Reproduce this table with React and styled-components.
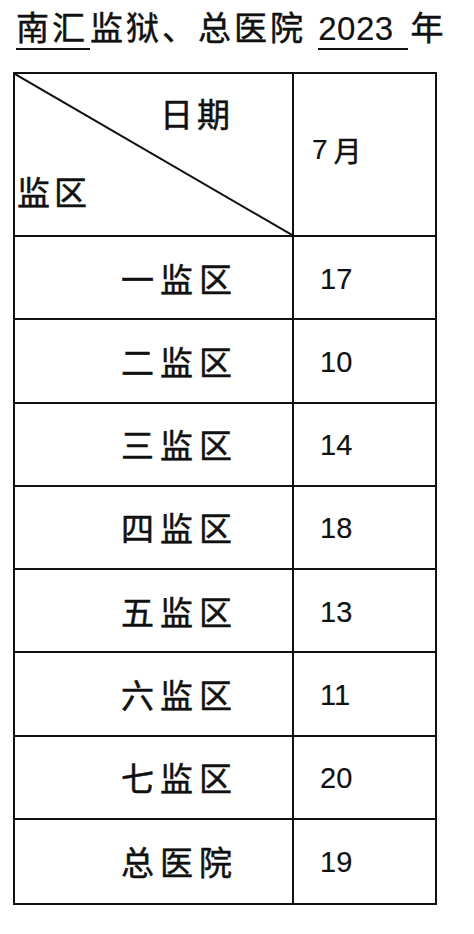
import React from "react";
import styled, { createGlobalStyle } from "styled-components";

const Global = createGlobalStyle`
  html, body { margin: 0; padding: 0; background: #fff; }
  body { font-family: "Liberation Sans", "Noto Sans CJK SC", sans-serif; color: #111; }
`;

const Page = styled.div`
  width: 474px;
  height: 934px;
  background: #fff;
  overflow: hidden;
  -webkit-text-stroke: 0.5px #111;
`;

const Title = styled.h1`
  margin: 0;
  padding: 9px 0 0 16px;
  font-size: 33px;
  line-height: 40px;
  font-weight: 400;
  letter-spacing: 3px;
  white-space: nowrap;
`;

const Under = styled.span`
  display: inline-block;
  border-bottom: 2px solid #111;
  line-height: 38px;
  padding: 0 ${(p) => p.$pr || 0}px 0 ${(p) => p.$pl || 0}px;
  margin-right: ${(p) => p.$mr || 0}px;
`;

const Digits = styled.span`
  letter-spacing: ${(p) => p.$ls || 0}px;
  margin-right: ${(p) => p.$mr || 0}px;
  -webkit-text-stroke: 0.15px #111;
`;

const Grid = styled.div`
  margin: 22px 0 0 13px;
  width: 420px;
  border: 2px solid #111;
  display: grid;
  grid-template-columns: 279px 141px;
  grid-template-rows: 163px repeat(8, 83.25px);
`;

const Cell = styled.div`
  position: relative;
  display: flex;
  align-items: center;
  border-right: ${(p) => (p.$last ? "none" : "2px solid #111")};
  border-bottom: ${(p) => (p.$bottom ? "none" : "2px solid #111")};
  box-sizing: border-box;
`;

const HeadCell = styled(Cell)`
  flex-direction: column;
  align-items: stretch;
  justify-content: space-between;
  padding: 22px 0 21px 2px;
`;

const Diagonal = styled.svg`
  position: absolute;
  inset: 0;
  width: 100%;
  height: 100%;
`;

const HeadTop = styled.div`
  align-self: flex-end;
  padding-right: 58px;
  font-size: 33px;
  line-height: 40px;
  letter-spacing: 4px;
`;

const HeadLeft = styled.div`
  font-size: 33px;
  line-height: 40px;
  letter-spacing: 4px;
`;

const Month = styled(Cell)`
  padding-left: 18px;
  padding-bottom: 10px;
  font-size: 28px;
`;

const Label = styled(Cell)`
  justify-content: flex-end;
  padding-right: 54px;
  font-size: 33px;
  letter-spacing: 6px;
`;

const Value = styled(Cell)`
  padding-left: 26px;
  padding-top: 3px;
  font-size: 29px;
  -webkit-text-stroke: 0.15px #111;
`;

const rows = [
  ["一监区", "17"],
  ["二监区", "10"],
  ["三监区", "14"],
  ["四监区", "18"],
  ["五监区", "13"],
  ["六监区", "11"],
  ["七监区", "20"],
  ["总医院", "19"],
];

export default function App() {
  return (
    <Page>
      <Global />
      <Title>
        <Under $pr={2}>南汇</Under>监狱、总医院{" "}
        <Under $pr={14} $mr={3}>
          <Digits $ls={0.5}>2023</Digits>
        </Under>
        年
      </Title>
      <Grid>
        <HeadCell>
          <Diagonal viewBox="0 0 279 163" preserveAspectRatio="none">
            <line x1="0" y1="0" x2="279" y2="163" stroke="#111" strokeWidth="2" />
          </Diagonal>
          <HeadTop>日期</HeadTop>
          <HeadLeft>监区</HeadLeft>
        </HeadCell>
        <Month $last>
          <Digits $mr={6}>7</Digits>
          <span>月</span>
        </Month>
        {rows.map(([l, v], i) => (
          <React.Fragment key={l}>
            <Label $bottom={i === rows.length - 1}>{l}</Label>
            <Value $last $bottom={i === rows.length - 1}>{v}</Value>
          </React.Fragment>
        ))}
      </Grid>
    </Page>
  );
}
